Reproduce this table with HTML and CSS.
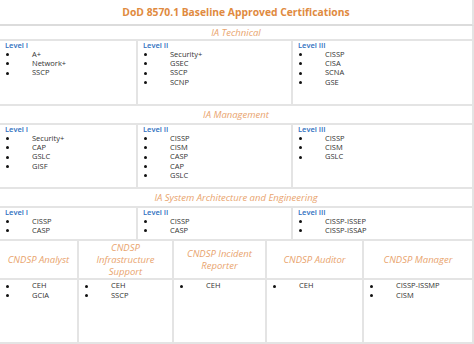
FILE: index.html
```html
<!DOCTYPE html>
<html>
<head>
<meta charset="utf-8">
<link rel="stylesheet" href="styles.css">
</head>
<body>
<div class="sheet">
  <div class="title">DoD 8570.1 Baseline Approved Certifications</div>

  <div class="section">IA Technical</div>
  <div class="levels levels-tall">
    <div class="cell">
      <div class="level">Level I</div>
      <ul class="list"><li>A+</li><li>Network+</li><li>SSCP</li></ul>
    </div>
    <div class="cell">
      <div class="level">Level II</div>
      <ul class="list"><li>Security+</li><li>GSEC</li><li>SSCP</li><li>SCNP</li></ul>
    </div>
    <div class="cell">
      <div class="level">Level III</div>
      <ul class="list"><li>CISSP</li><li>CISA</li><li>SCNA</li><li>GSE</li></ul>
    </div>
  </div>

  <div class="section section-mid">IA Management</div>
  <div class="levels levels-mid">
    <div class="cell">
      <div class="level">Level I</div>
      <ul class="list"><li>Security+</li><li>CAP</li><li>GSLC</li><li>GISF</li></ul>
    </div>
    <div class="cell">
      <div class="level">Level II</div>
      <ul class="list"><li>CISSP</li><li>CISM</li><li>CASP</li><li>CAP</li><li>GSLC</li></ul>
    </div>
    <div class="cell">
      <div class="level">Level III</div>
      <ul class="list"><li>CISSP</li><li>CISM</li><li>GSLC</li></ul>
    </div>
  </div>

  <div class="section section-mid">IA System Architecture and Engineering</div>
  <div class="levels">
    <div class="cell">
      <div class="level">Level I</div>
      <ul class="list"><li>CISSP</li><li>CASP</li></ul>
    </div>
    <div class="cell">
      <div class="level">Level II</div>
      <ul class="list"><li>CISSP</li><li>CASP</li></ul>
    </div>
    <div class="cell">
      <div class="level">Level III</div>
      <ul class="list"><li>CISSP-ISSEP</li><li>CISSP-ISSAP</li></ul>
    </div>
  </div>

  <div class="cndsp cndsp-head">
    <div class="hcell">CNDSP Analyst</div>
    <div class="hcell">CNDSP<br>Infrastructure<br>Support</div>
    <div class="hcell">CNDSP Incident<br>Reporter</div>
    <div class="hcell">CNDSP Auditor</div>
    <div class="hcell">CNDSP Manager</div>
  </div>
  <div class="cndsp cndsp-body">
    <div class="cell"><ul class="list"><li>CEH</li><li>GCIA</li></ul></div>
    <div class="cell"><ul class="list"><li>CEH</li><li>SSCP</li></ul></div>
    <div class="cell"><ul class="list"><li>CEH</li></ul></div>
    <div class="cell"><ul class="list"><li>CEH</li></ul></div>
    <div class="cell"><ul class="list"><li>CISSP-ISSMP</li><li>CISM</li></ul></div>
  </div>
</div>
</body>
</html>
```

FILE: styles.css
```css
* { box-sizing: border-box; }

html, body {
  margin: 0;
  padding: 0;
  background: #ffffff;
}

body {
  font-family: "Open Sans", "Liberation Sans", sans-serif;
  color: #333333;
  width: 474px;
  height: 344px;
  overflow: hidden;
}

.sheet {
  width: 474px;
  display: flex;
  flex-direction: column;
}

.title {
  height: 26px;
  border-bottom: 2px solid #dcdcdc;
  border-right: 2px solid #e4e4e4;
  text-align: center;
  font-weight: 700;
  font-size: 10.3px;
  line-height: 24px;
  color: #e08a40;
}

.section {
  height: 15px;
  border-bottom: 2px solid #e4e4e4;
  border-right: 2px solid #e4e4e4;
  text-align: center;
  font-style: italic;
  font-size: 9.5px;
  line-height: 13px;
  color: #e9a46e;
}

.section-mid {
  height: 19px;
  line-height: 18px;
}

.levels {
  display: grid;
  grid-template-columns: 138px 155px 1fr;
}

.levels-tall { height: 65px; }
.levels-mid { height: 64px; }

.cell {
  border-right: 2px solid #e4e4e4;
  border-bottom: 2px solid #e4e4e4;
  padding: 0 4px 4px 5px;
}

.level {
  font-size: 7.5px;
  font-weight: 600;
  line-height: 9px;
  color: #2f6fc0;
}

.list {
  list-style: none;
  margin: 0;
  padding: 0;
}

.list li {
  display: flex;
  align-items: center;
  font-size: 7.5px;
  line-height: 9.2px;
  color: #333333;
}

.list li::before {
  content: "";
  flex: none;
  width: 3px;
  height: 3px;
  border-radius: 50%;
  background: #111111;
  margin: 0 23px 0 1px;
}

.cndsp {
  display: grid;
  grid-template-columns: 79px 95px 93px 97px 1fr;
}

.cndsp-head { height: 39px; }

.hcell {
  border-right: 2px solid #e4e4e4;
  border-bottom: 2px solid #e4e4e4;
  display: flex;
  align-items: center;
  justify-content: center;
  text-align: center;
  font-style: italic;
  font-size: 9.5px;
  line-height: 12px;
  color: #e9a46e;
}

.cndsp-body { height: 64px; }

.cndsp-body .cell { padding-top: 1px; }
```
